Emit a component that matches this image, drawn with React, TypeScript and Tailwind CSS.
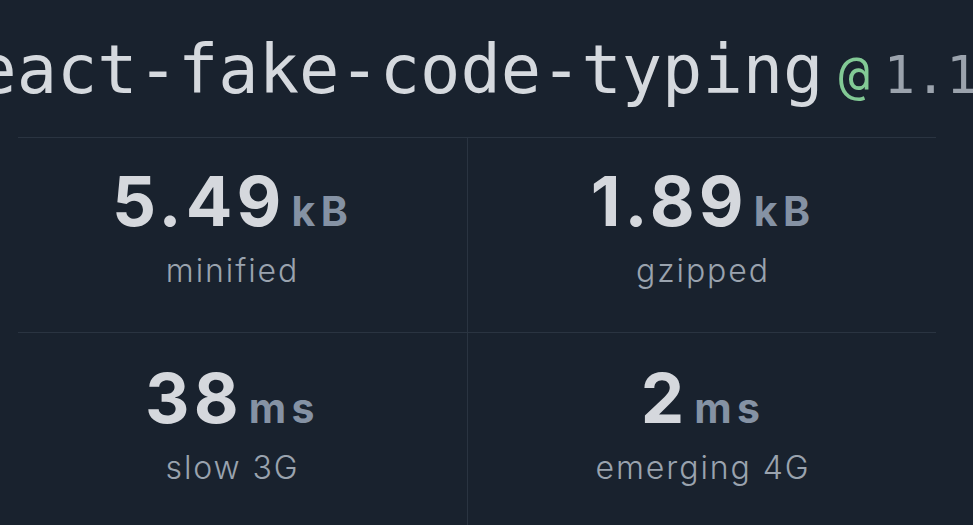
import React from 'react';

const stats = [
  { value: '5.49', unit: 'kB', label: 'minified' },
  { value: '1.89', unit: 'kB', label: 'gzipped' },
  { value: '38', unit: 'ms', label: 'slow 3G' },
  { value: '2', unit: 'ms', label: 'emerging 4G' },
];

function Stat({ value, unit, label }: { value: string; unit: string; label: string }) {
  return (
    <div className="flex flex-col items-center">
      <div className="flex items-baseline">
        <span className="text-[69px] leading-[68px] font-bold tracking-[0.06em] text-[#d5d8dd]">{value}</span>
        <span className="ml-[6px] text-[41px] font-bold tracking-[0.13em] text-[#8592a4]">{unit}</span>
      </div>
      <div className="mt-[9px] text-[32px] leading-[38px] font-light tracking-[0.06em] text-[#9aa3ae]">
        {label}
      </div>
    </div>
  );
}

export default function App() {
  return (
    <div className="w-[973px] h-[525px] overflow-hidden bg-[#19222e] font-['Inter',sans-serif]">
      {/* Package title */}
      <div className="h-[137px] pt-[37px] whitespace-nowrap">
        <div className="flex items-baseline ml-[-64px] font-['DejaVu_Sans_Mono',monospace]">
          <span className="text-[67px] leading-[67px] text-[#d5d9de]">react-fake-code-typing</span>
          <span className="ml-[15px] text-[52px] leading-[52px] text-[#82c995]">@</span>
          <span className="ml-[14px] text-[52px] leading-[52px] text-[#9ba3ad]">1.1.0</span>
        </div>
      </div>

      {/* Stats grid */}
      <div>
        <div className="ml-[18px] w-[918px] border-t border-[#2a3441]" />
        <div className="flex ml-[-2px] w-[940px]">
          <div className="w-[470px] h-[194px] pt-[29px] border-r border-[#2a3441]">
            <Stat {...stats[0]} />
          </div>
          <div className="w-[470px] h-[194px] pt-[29px]">
            <Stat {...stats[1]} />
          </div>
        </div>
        <div className="ml-[18px] w-[918px] border-t border-[#2a3441]" />
        <div className="flex ml-[-2px] w-[940px]">
          <div className="w-[470px] h-[200px] pt-[31px] border-r border-[#2a3441]">
            <Stat {...stats[2]} />
          </div>
          <div className="w-[470px] h-[200px] pt-[31px]">
            <Stat {...stats[3]} />
          </div>
        </div>
      </div>
    </div>
  );
}
